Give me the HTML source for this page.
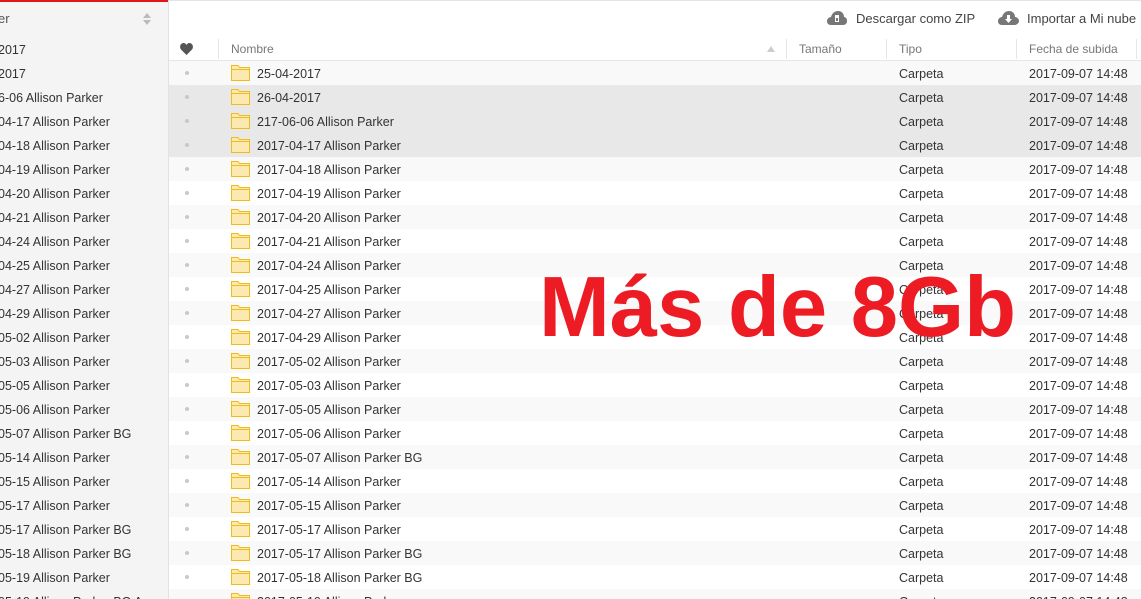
<!DOCTYPE html>
<html><head><meta charset="utf-8"><style>
*{margin:0;padding:0;box-sizing:border-box}
html,body{width:1141px;height:599px;overflow:hidden}
body{background:#fff;font-family:"Liberation Sans",sans-serif;font-size:12.5px;color:#333;position:relative}
#side{position:absolute;left:0;top:0;width:169px;height:599px;background:#f4f4f4;border-right:1px solid #e2e2e2;overflow:hidden}
#side .red{position:absolute;left:0;top:0;width:168px;height:2px;background:#e4141b}
#side .hd{position:absolute;left:-2px;top:11px;font-size:13px;color:#555}
#side .sort{position:absolute;left:143px;top:12px;width:8px;height:14px}
#side .it{position:absolute;left:-2px;white-space:nowrap;height:24px;line-height:26px}
#topline{position:absolute;left:169px;top:0;right:0;height:1px;background:#e4e4e4}
.tb{position:absolute;top:11px;font-size:13px;color:#444;white-space:nowrap}
.hdr{position:absolute;top:37px;left:169px;right:0;height:24px;border-bottom:1px solid #e6e6e6;color:#777;font-size:12px}
.hdr span{position:absolute;top:5px}
.vl{position:absolute;top:2px;width:1px;height:20px;background:#e6e6e6}
#rows{position:absolute;left:0;top:0;width:1141px;height:599px;overflow:hidden}
.row{position:absolute;left:169px;right:0;height:24px;line-height:26px;white-space:nowrap}
.row span{position:absolute}
.dot{left:16px;top:10px;width:4px;height:4px;border-radius:2px;background:#c8c8c8}
.fold{position:absolute;left:62px;top:4px}
#big{position:absolute;left:539px;top:258px;font-size:85px;font-weight:bold;color:#ed1c24;white-space:nowrap;line-height:100px}
</style></head><body>
<div id="side"><div class="red"></div><div class="hd">er</div>
<svg class="sort" viewBox="0 0 8 14"><path d="M0 6L4 1L8 6Z M0 8L4 13L8 8Z" fill="#bbb"/></svg>
<div class="it" style="top:37px">2017</div>
<div class="it" style="top:61px">2017</div>
<div class="it" style="top:85px">6-06 Allison Parker</div>
<div class="it" style="top:109px">04-17 Allison Parker</div>
<div class="it" style="top:133px">04-18 Allison Parker</div>
<div class="it" style="top:157px">04-19 Allison Parker</div>
<div class="it" style="top:181px">04-20 Allison Parker</div>
<div class="it" style="top:205px">04-21 Allison Parker</div>
<div class="it" style="top:229px">04-24 Allison Parker</div>
<div class="it" style="top:253px">04-25 Allison Parker</div>
<div class="it" style="top:277px">04-27 Allison Parker</div>
<div class="it" style="top:301px">04-29 Allison Parker</div>
<div class="it" style="top:325px">05-02 Allison Parker</div>
<div class="it" style="top:349px">05-03 Allison Parker</div>
<div class="it" style="top:373px">05-05 Allison Parker</div>
<div class="it" style="top:397px">05-06 Allison Parker</div>
<div class="it" style="top:421px">05-07 Allison Parker BG</div>
<div class="it" style="top:445px">05-14 Allison Parker</div>
<div class="it" style="top:469px">05-15 Allison Parker</div>
<div class="it" style="top:493px">05-17 Allison Parker</div>
<div class="it" style="top:517px">05-17 Allison Parker BG</div>
<div class="it" style="top:541px">05-18 Allison Parker BG</div>
<div class="it" style="top:565px">05-19 Allison Parker</div>
<div class="it" style="top:589px">05-19 Allison Parker BG A</div>
</div>
<div id="topline"></div>
<svg style="position:absolute;left:827px;top:10px" width="20" height="16" viewBox="0 0 20 16"><path d="M4 15C1 15 0 13 0 11C0 9 2 7 4 7C5 3 8 1 11 1C15 1 17 4 17 7C19 7 20 9 20 11C20 13 19 15 16 15Z" fill="#777"/><rect x="8" y="5" width="4" height="7" fill="#fff"/><rect x="9" y="8" width="2" height="3" fill="#777"/></svg>
<div class="tb" style="left:856px">Descargar como ZIP</div>
<svg style="position:absolute;left:998px;top:10px" width="21" height="16" viewBox="0 0 21 16"><path d="M4 15C1 15 0 13 0 11C0 9 2 7 4 7C5 3 8 1 11 1C15 1 17 4 17 7C19 7 21 9 21 11C21 13 19 15 16 15Z" fill="#777"/><path d="M9 5H12V9H14L10.5 13L7 9H9Z" fill="#fff"/></svg>
<div class="tb" style="left:1027px">Importar a Mi nube</div>
<div class="hdr">
<svg style="position:absolute;left:11px;top:6px" width="13" height="12" viewBox="0 0 13 12"><path d="M6.5 12L1 6.5C-1 4 .5 0 3.5 0C5 0 6 1 6.5 2C7 1 8 0 9.5 0C12.5 0 14 4 12 6.5Z" fill="#555"/></svg>
<div class="vl" style="left:49px"></div>
<span style="left:62px">Nombre</span>
<svg style="position:absolute;left:598px;top:9px" width="8" height="6"><path d="M0 6L4 0L8 6Z" fill="#ccc"/></svg>
<div class="vl" style="left:617px"></div>
<span style="left:630px">Tamaño</span>
<div class="vl" style="left:717px"></div>
<span style="left:730px">Tipo</span>
<div class="vl" style="left:847px"></div>
<span style="left:860px">Fecha de subida</span>
<div class="vl" style="left:967px"></div>
</div>
<div id="rows"></div>
<script>
var n=["25-04-2017","26-04-2017","217-06-06 Allison Parker","2017-04-17 Allison Parker","2017-04-18 Allison Parker","2017-04-19 Allison Parker","2017-04-20 Allison Parker","2017-04-21 Allison Parker","2017-04-24 Allison Parker","2017-04-25 Allison Parker","2017-04-27 Allison Parker","2017-04-29 Allison Parker","2017-05-02 Allison Parker","2017-05-03 Allison Parker","2017-05-05 Allison Parker","2017-05-06 Allison Parker","2017-05-07 Allison Parker BG","2017-05-14 Allison Parker","2017-05-15 Allison Parker","2017-05-17 Allison Parker","2017-05-17 Allison Parker BG","2017-05-18 Allison Parker BG","2017-05-19 Allison Parker"];
var h="";
for(var i=0;i<n.length;i++){var bg=(i>=1&&i<=3)?"#e8e8e8":(i%2==0?"#f9f9f9":"#fff");
h+='<div class="row" style="top:'+(61+i*24)+'px;background:'+bg+'"><span class="dot"></span><svg class="fold" width="19" height="16" viewBox="0 0 19 16"><path d="M.5 15.5V.5H7L8.5 2.5H18.5V15.5Z" fill="#fbe9b0" stroke="#eebd1d"/><path d="M.5 4.5H18.5" stroke="#eebd1d"/></svg><span style="left:88px">'+n[i]+'</span><span style="left:730px">Carpeta</span><span style="left:860px">2017-09-07 14:48</span></div>';}
document.getElementById("rows").innerHTML=h;
</script>
<div id="big">Más de 8Gb</div>
</body></html>
